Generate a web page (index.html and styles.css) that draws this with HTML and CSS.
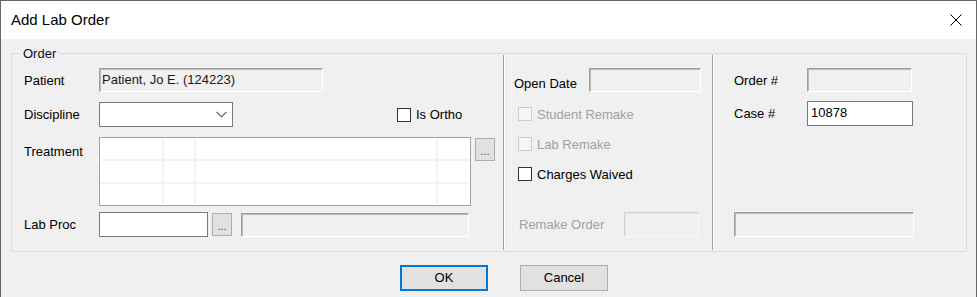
FILE: index.html
```html
<!DOCTYPE html>
<html lang="en">

<head>
    <meta charset="UTF-8">
    <meta name="viewport" content="width=device-width, initial-scale=1.0">
    <title>Add Lab Order</title>
    <link rel="stylesheet" href="styles.css">
</head>

<body>
    <div class="window">
        <div class="titlebar">
            <span class="title">Add Lab Order</span>
            <svg class="close" width="12" height="12" viewBox="0 0 12 12">
                <path d="M0.5 0.5 L11.5 11.5 M11.5 0.5 L0.5 11.5" stroke="#000" stroke-width="1" fill="none" />
            </svg>
        </div>

        <div class="client">
            <div class="group">
                <span class="group-caption">Order</span>

                <!-- left pane -->
                <div class="pane pane-main">
                    <div class="row">
                        <span class="label">Patient</span>
                        <div class="box readonly patient-box">Patient, Jo E. (124223)</div>
                    </div>
                    <div class="row row-discipline">
                        <span class="label">Discipline</span>
                        <div class="box combo">
                            <svg width="11" height="7" viewBox="0 0 11 7">
                                <path d="M0.5 0.8 L5.5 5.8 L10.5 0.8" stroke="#555" stroke-width="1.1" fill="none" />
                            </svg>
                        </div>
                        <div class="check check-ortho"><span class="checkbox"></span>Is Ortho</div>
                    </div>
                    <div class="row row-treatment">
                        <span class="label label-top">Treatment</span>
                        <div class="grid">
                            <div class="cell"></div><div class="cell"></div><div class="cell"></div><div class="cell"></div>
                            <div class="cell"></div><div class="cell"></div><div class="cell"></div><div class="cell"></div>
                            <div class="cell"></div><div class="cell"></div><div class="cell"></div><div class="cell"></div>
                        </div>
                        <span class="ellipsis ellipsis-grid">...</span>
                    </div>
                    <div class="row row-labproc">
                        <span class="label">Lab Proc</span>
                        <div class="box input labproc-box"></div>
                        <span class="ellipsis ellipsis-proc">...</span>
                        <div class="box readonly proc-desc"></div>
                    </div>
                </div>

                <!-- middle pane -->
                <div class="pane pane-mid">
                    <div class="row row-open">
                        <span class="label label-open">Open Date</span>
                        <div class="box readonly open-box"></div>
                    </div>
                    <div class="check check-row disabled first-check"><span class="checkbox"></span>Student Remake</div>
                    <div class="check check-row disabled"><span class="checkbox"></span>Lab Remake</div>
                    <div class="check check-row"><span class="checkbox"></span>Charges Waived</div>
                    <div class="row row-bottom row-remake">
                        <span class="label muted remake-label">Remake Order</span>
                        <div class="box off remake-box"></div>
                    </div>
                </div>

                <!-- right pane -->
                <div class="pane pane-side">
                    <div class="row">
                        <span class="label side-label">Order #</span>
                        <div class="box readonly order-box"></div>
                    </div>
                    <div class="row row-case">
                        <span class="label side-label">Case #</span>
                        <div class="box input case-box">10878</div>
                    </div>
                    <div class="row row-bottom">
                        <div class="box readonly side-desc"></div>
                    </div>
                </div>
            </div>

            <div class="actions">
                <span class="btn btn-default">OK</span>
                <span class="btn">Cancel</span>
            </div>
        </div>
    </div>
</body>

</html>
```

FILE: styles.css
```css
body {
    margin: 0;
    padding: 0;
    font-family: "Liberation Sans", Arial, sans-serif;
    font-size: 13px;
    color: #000;
    background-color: #f0f0f0;
}

.window {
    width: 977px;
    height: 297px;
    box-sizing: border-box;
    border: 1px solid #666;
    border-bottom: none;
    display: flex;
    flex-direction: column;
    overflow: hidden;
}

.titlebar {
    height: 38px;
    flex-shrink: 0;
    background-color: #fff;
    display: flex;
    align-items: center;
    justify-content: space-between;
    padding-left: 10px;
    padding-right: 14px;
}

.title {
    font-size: 15px;
    line-height: 18px;
}

.close {
    display: block;
}

.client {
    flex: 1;
    background-color: #f0f0f0;
    padding: 14px 9px 0 10px;
}

.group {
    position: relative;
    height: 199px;
    box-sizing: border-box;
    border: 1px solid #dcdcdc;
    padding: 1px 0;
    display: grid;
    grid-template-columns: 491px 209px 1fr;
}

.group-caption {
    position: absolute;
    left: 9px;
    top: -8px;
    padding: 0 2px;
    line-height: 15px;
    background-color: #f0f0f0;
    color: #0a0a30;
}

.pane {
    display: flex;
    flex-direction: column;
    padding-top: 13px;
    padding-bottom: 13px;
}

.pane-main {
    padding-left: 12px;
}

.pane-mid {
    border-left: 1px solid #a0a0a0;
    box-shadow: inset 1px 0 0 #fff;
    padding-left: 10px;
}

.pane-side {
    border-left: 1px solid #a0a0a0;
    box-shadow: inset 1px 0 0 #fff;
    padding-left: 21px;
}

.row {
    display: flex;
    align-items: center;
}

.label {
    width: 75px;
    flex-shrink: 0;
    line-height: 15px;
}

.label-top {
    align-self: flex-start;
    margin-top: 7px;
}

.muted {
    color: #a0a0a0;
}

/* text boxes */
.box {
    box-sizing: border-box;
    height: 25px;
    line-height: 22px;
    padding-left: 2px;
    flex-shrink: 0;
}

.input {
    background-color: #fff;
    border: 1px solid #7a7a7a;
}

.readonly {
    height: 24px;
    background-color: #f0f0f0;
    border: 1px solid;
    border-color: #a0a0a0 #fff #fff #a0a0a0;
    box-shadow: inset 1px 1px 0 #b9b9b9;
    color: #1a1a1a;
}

.off {
    background-color: #f0f0f0;
    border: 1px solid;
    border-color: #d2d2d2 #fafafa #fafafa #d2d2d2;
    box-shadow: inset 1px 1px 0 #e2e2e2;
}

.patient-box {
    width: 224px;
}

.combo {
    width: 134px;
    background-color: #fff;
    border: 1px solid #7a7a7a;
    display: flex;
    align-items: center;
    justify-content: flex-end;
    padding-right: 5px;
}

.combo svg {
    display: block;
}

.row-discipline {
    margin-top: 10px;
}

.row-treatment {
    margin-top: 10px;
    align-items: flex-start;
}

.row-labproc {
    margin-top: 6px;
}

.grid {
    width: 372px;
    height: 69px;
    box-sizing: border-box;
    border: 1px solid #a0a0a0;
    padding: 1px;
    background-color: #fff;
    display: grid;
    grid-template-columns: 61px 30px 240px 1fr;
    grid-template-rows: 1fr 1fr 1fr;
    gap: 2px;
    background-clip: content-box;
    background-color: #f2f2f2;
    box-shadow: inset 0 0 0 1px #fff;
}

.cell {
    background-color: #fff;
}

.ellipsis {
    box-sizing: border-box;
    width: 20px;
    height: 23px;
    background-color: #e1e1e1;
    border: 1px solid #adadad;
    font-size: 11px;
    line-height: 24px;
    text-align: center;
    color: #444;
    flex-shrink: 0;
}

.ellipsis-grid {
    margin-left: 4px;
    margin-top: 1px;
}

.ellipsis-proc {
    margin-left: 4px;
}

.labproc-box {
    width: 109px;
}

.proc-desc {
    width: 228px;
    margin-left: 9px;
}

/* middle pane */
.label-open {
    margin-top: 7px;
}

.open-box {
    width: 112px;
}

.check {
    display: flex;
    align-items: center;
    line-height: 15px;
}

.checkbox {
    width: 14px;
    height: 14px;
    box-sizing: border-box;
    border: 1px solid #333;
    background-color: #fff;
    margin-right: 5px;
    flex-shrink: 0;
}

.check-ortho {
    margin-left: 164px;
}

.check-row {
    height: 20px;
    margin-top: 10px;
    padding-left: 4px;
}

.first-check {
    margin-top: 12px;
}

.disabled {
    color: #a0a0a0;
}

.disabled .checkbox {
    border-color: #cdcdcd;
    background-color: #f6f6f6;
}

.row-bottom {
    margin-top: auto;
}

.remake-label {
    width: 105px;
    padding-left: 5px;
    box-sizing: border-box;
    width: 110px;
}

.remake-box {
    width: 75px;
}

/* right pane */
.side-label {
    width: 73px;
}

.order-box {
    width: 105px;
}

.row-case {
    margin-top: 9px;
}

.case-box {
    width: 106px;
    padding-left: 3px;
}

.side-desc {
    width: 180px;
    height: 25px;
}

/* buttons */
.actions {
    display: flex;
    gap: 32px;
    margin-top: 13px;
    padding-left: 389px;
}

.btn {
    box-sizing: border-box;
    width: 88px;
    height: 26px;
    background-color: #e1e1e1;
    border: 1px solid #adadad;
    line-height: 24px;
    text-align: center;
}

.btn-default {
    border: 2px solid #0078d7;
    line-height: 22px;
}
```
